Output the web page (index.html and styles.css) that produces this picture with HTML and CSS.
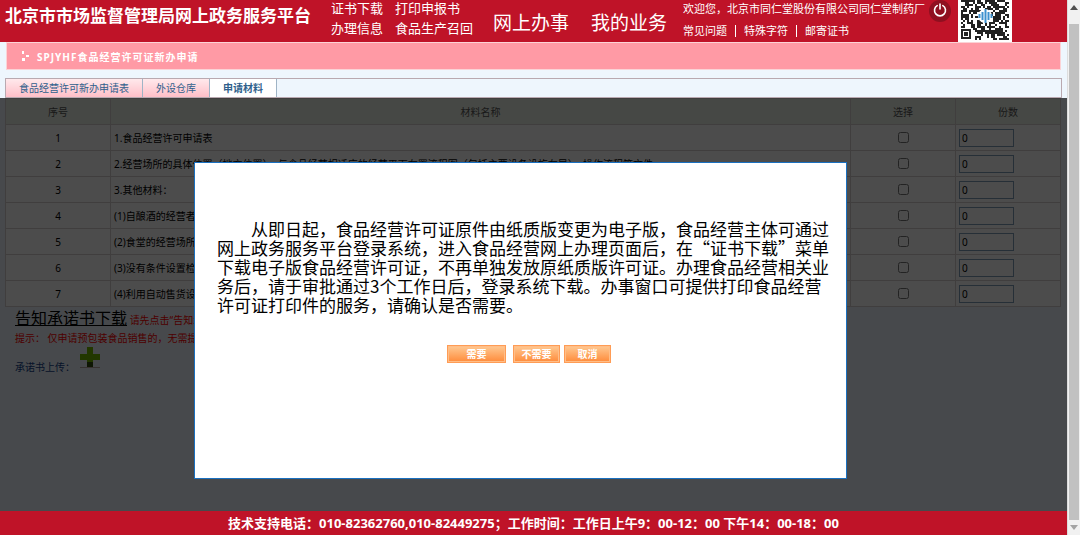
FILE: index.html
```html
<!DOCTYPE html>
<html lang="zh-CN">
<head>
    <meta charset="UTF-8">
    <meta name="viewport" content="width=device-width, initial-scale=1.0">
    <title>北京市市场监督管理局网上政务服务平台</title>
    <link rel="stylesheet" href="styles.css">
</head>
<body>
    <div class="app">
        <header class="header">
            <h1>北京市市场监督管理局网上政务服务平台</h1>
            <nav class="small-nav">
                <a href="#">证书下载</a>
                <a href="#">打印申报书</a>
                <a href="#">办理信息</a>
                <a href="#">食品生产召回</a>
            </nav>
            <nav class="main-nav">
                <a href="#">网上办事</a>
                <a href="#">我的业务</a>
            </nav>
            <div class="user">
                <p>欢迎您，北京市同仁堂股份有限公司同仁堂制药厂</p>
                <p class="help"><a href="#">常见问题</a><a href="#">特殊字符</a><a href="#">邮寄证书</a></p>
            </div>
            <button class="logout" aria-label="退出">
                <svg width="14" height="14" viewBox="0 0 14 14" fill="none" stroke="#fff" stroke-width="1.6" stroke-linecap="round">
                    <path d="M4.2 2.6A5.5 5.5 0 1 0 9.8 2.6M7 1v5"/>
                </svg>
            </button>
            <svg class="qr" id="qr" viewBox="0 0 54 42"></svg>
        </header>

        <div class="title-bar">
            <svg width="8" height="10" viewBox="0 0 8 10" fill="#fff">
                <path d="M1 0h2v3H1zM5 4h3v2H5zM1 7h3v3H1z"/>
            </svg>
            <h2>SPJYHF食品经营许可证新办申请</h2>
        </div>

        <div class="tabs">
            <button class="tab">食品经营许可新办申请表</button>
            <button class="tab">外设仓库</button>
            <button class="tab active">申请材料</button>
        </div>

        <main class="work">
            <table class="materials">
                <thead>
                    <tr><th class="col-s">序号</th><th>材料名称</th><th class="col-s">选择</th><th class="col-s">份数</th></tr>
                </thead>
                <tbody>
                    <tr><td>1</td><td>1.食品经营许可申请表</td><td><input type="checkbox" aria-label="选择1"></td><td><input type="text" value="0" aria-label="份数1"></td></tr>
                    <tr><td>2</td><td>2.经营场所的具体位置（地方位置）, 与食品经营相适应的经营平面布置流程图（包括主要设备设施布局）, 操作流程等文件</td><td><input type="checkbox" aria-label="选择2"></td><td><input type="text" value="0" aria-label="份数2"></td></tr>
                    <tr><td>3</td><td>3.其他材料：</td><td><input type="checkbox" aria-label="选择3"></td><td><input type="text" value="0" aria-label="份数3"></td></tr>
                    <tr><td>4</td><td>(1)自酿酒的经营者</td><td><input type="checkbox" aria-label="选择4"></td><td><input type="text" value="0" aria-label="份数4"></td></tr>
                    <tr><td>5</td><td>(2)食堂的经营场所</td><td><input type="checkbox" aria-label="选择5"></td><td><input type="text" value="0" aria-label="份数5"></td></tr>
                    <tr><td>6</td><td>(3)没有条件设置检</td><td><input type="checkbox" aria-label="选择6"></td><td><input type="text" value="0" aria-label="份数6"></td></tr>
                    <tr><td>7</td><td>(4)利用自动售货设</td><td><input type="checkbox" aria-label="选择7"></td><td><input type="text" value="0" aria-label="份数7"></td></tr>
                </tbody>
            </table>
            <div class="notes">
                <p class="download"><a href="#">告知承诺书下载</a> <span>请先点击“告知承</span></p>
                <p class="tip">提示： 仅申请预包装食品销售的，无需提交</p>
                <div class="upload">
                    <span>承诺书上传：</span>
                    <button class="add" aria-label="上传">
                        <svg width="22" height="22" viewBox="0 0 22 22">
                            <path d="M1 20.5h20" stroke="#b7a9a3"/>
                            <path d="M8 0h6v7h7v6h-7v7H8v-7H1V7h7z" fill="#73b800"/>
                            <path d="M8 15h6v5H8z" fill="#354d10"/>
                        </svg>
                    </button>
                </div>
            </div>
            <div class="overlay">
                <div class="dialog" role="dialog" aria-modal="true" aria-labelledby="message">
                    <p id="message">从即日起，食品经营许可证原件由纸质版变更为电子版，食品经营主体可通过网上政务服务平台登录系统，进入食品经营网上办理页面后，在“证书下载”菜单下载电子版食品经营许可证，不再单独发放原纸质版许可证。办理食品经营相关业务后，请于审批通过3个工作日后，登录系统下载。办事窗口可提供打印食品经营许可证打印件的服务，请确认是否需要。</p>
                    <div class="actions">
                        <button class="wide">需要</button>
                        <button>不需要</button>
                        <button>取消</button>
                    </div>
                </div>
            </div>
        </main>

        <footer class="footer">技术支持电话：010-82362760,010-82449275；工作时间：工作日上午9：00-12：00 下午14：00-18：00</footer>
    </div>
    <div class="scrollbar">
        <svg width="8" height="5" viewBox="0 0 8 5" fill="#505050"><path d="M0 5l4-5 4 5z"/></svg>
        <div class="thumb"></div>
        <svg width="8" height="5" viewBox="0 0 8 5" fill="#a3a3a3"><path d="M0 0l4 5 4-5z"/></svg>
    </div>
    <script src="script.js"></script>
</body>
</html>
```
FILE: styles.css
```css
* {
    box-sizing: border-box;
}
body {
    margin: 0;
    display: flex;
    min-height: 100vh;
    background: #eef6fd;
    font-family: "Noto Sans", "Noto Sans CJK SC", sans-serif;
    font-size: 10px;
}
p, h1, h2 {
    margin: 0;
}
a {
    color: inherit;
    text-decoration: none;
}
button {
    font-family: inherit;
    cursor: pointer;
}
.app {
    flex: 1;
    min-width: 0;
    display: flex;
    flex-direction: column;
}

/* header */
.header {
    display: flex;
    height: 42px;
    padding-left: 5px;
    background: #bf1328;
    color: #fff;
    white-space: nowrap;
}
.header h1 {
    width: 326px;
    font-size: 17px;
    line-height: 32px;
}
.small-nav {
    display: grid;
    grid-template-columns: auto auto;
    gap: 4px 12px;
    align-content: start;
    justify-content: start;
    width: 162px;
    font-size: 13px;
    line-height: 16px;
}
.main-nav {
    display: flex;
    gap: 22px;
    width: 190px;
    font-size: 19px;
    line-height: 46px;
}
.user {
    width: 246px;
    font-size: 11px;
    line-height: 22px;
    margin-top: -2px;
}
.help a {
    display: inline-block;
    line-height: 12px;
}
.help a + a {
    margin-left: 8px;
    padding-left: 8px;
    border-left: 1px solid #fff;
}
.logout {
    display: flex;
    align-items: center;
    justify-content: center;
    width: 22px;
    height: 22px;
    margin-right: 7px;
    padding: 0 0 2px;
    border: 0;
    border-radius: 50%;
    background: #8f1020;
}
.qr {
    width: 54px;
    height: 42px;
    background: #fff;
}

/* page title and tabs */
.title-bar {
    display: flex;
    align-items: center;
    gap: 8px;
    height: 28px;
    margin: 0 6px;
    padding-left: 14px;
    background: #ff9aa5;
    border: 1px solid #fbd3d6;
    color: #fff;
}
.title-bar h2 {
    font-size: 10px;
    letter-spacing: 1px;
}
.tabs {
    display: flex;
    height: 20px;
    margin: 8px 5px 0;
    border: 1px solid #b9a9b0;
}
.tab {
    padding: 0 13px;
    border: 0;
    border-right: 1px solid #9fb4c6;
    background: linear-gradient(#ffe9ec, #ffbfc8);
    color: #2f5f8c;
    font-size: 10px;
    line-height: 16px;
}
.tab.active {
    background: #fff;
    font-weight: bold;
}

/* materials table */
.work {
    position: relative;
    flex: 1;
}
.materials {
    width: calc(100% - 11px);
    margin: 0 6px 0 5px;
    border-collapse: collapse;
    table-layout: fixed;
    background: #fff;
}
.materials th,
.materials td {
    height: 26px;
    padding: 0 3px;
    border: 1px solid #d6d0d0;
    text-align: center;
    line-height: 16px;
    white-space: nowrap;
    overflow: hidden;
}
.materials th {
    background: #ebf0e6;
    color: #555;
    font-weight: normal;
}
.materials .col-s {
    width: 105px;
}
.materials td:nth-child(2),
.materials td:last-child {
    text-align: left;
}
.materials input {
    display: block;
}
.materials input[type=checkbox] {
    width: 11px;
    height: 11px;
    margin: 0 auto;
}
.materials input[type=text] {
    width: 55px;
    height: 18px;
    padding: 0 2px;
    border: 1px solid #7f9db9;
    background: transparent;
    font-family: inherit;
    font-size: 10px;
}
.notes {
    padding: 0 15px;
    color: #f00;
}
.download {
    line-height: 22px;
}
.download a {
    color: #000;
    font-size: 16px;
    text-decoration: underline;
}
.tip {
    line-height: 14px;
}
.upload {
    display: flex;
    gap: 4px;
    color: #15428b;
    line-height: 44px;
}
.add {
    height: 22px;
    margin-top: 2px;
    padding: 0;
    border: 0;
    background: none;
}

/* confirm dialog */
.overlay {
    position: absolute;
    inset: 0;
    padding: 64px 220px 32px 194px;
    background: rgba(0, 0, 0, 0.7);
}
.dialog {
    height: 100%;
    padding: 56px 16px 0 22px;
    background: #fff;
    border: 1px solid #1a70c0;
}
.dialog p {
    font-family: "Noto Sans CJK SC", sans-serif;
    font-size: 17px;
    line-height: 19px;
    text-indent: 2em;
}
.actions {
    display: flex;
    justify-content: center;
    gap: 4px;
    margin-top: 31px;
    padding-left: 11px;
}
.actions button {
    width: 47px;
    height: 18px;
    padding: 0;
    border: 1px solid #ff9c55;
    background: linear-gradient(#ffc992, #ff8b3a);
    box-shadow: inset 0 0 0 1px #ffbe88;
    color: #fff;
    font-size: 10px;
    font-weight: bold;
    line-height: 16px;
}
.actions .wide {
    width: 59px;
    margin-right: 3px;
}

.footer {
    height: 24px;
    background: #bf1328;
    color: #fff;
    font-size: 13px;
    font-weight: bold;
    line-height: 24px;
    text-align: center;
}

.scrollbar {
    display: flex;
    flex-direction: column;
    align-items: center;
    width: 13px;
    padding: 5px 0;
    background: #f1f1f1;
    border-left: 1px solid #ddd;
}
.thumb {
    flex: 1;
    width: 10px;
    margin: 14px 0 5px;
    background: #c1c1c1;
}
```
FILE: script.js
```js
// QR code: modules outside the finder squares come from a fixed sequence
const size = 2;
const qr = document.getElementById('qr');
let d = '';
let seed = 77;
for (let y = 0; y < 20; y++) {
    for (let x = 0; x < 24; x++) {
        seed = (seed * 1103 + 12345) % 65536;
        const finder = y > 13 && x < 6;
        if (!finder && seed % 100 < 55) {
            d += `M${3 + x * size} ${y * size}h${size}v${size}h-${size}z`;
        }
    }
}
qr.innerHTML = `<path d="${d}" fill="#222"/>
    <path d="M4 30h8v8H4z" fill="#fff" stroke="#222" stroke-width="2"/>
    <path d="M6 32h4v4H6z" fill="#222"/>
    <circle cx="27" cy="16" r="7" fill="#fff"/>
    <path d="M21.5 14v4M24.5 12v8M27.5 9v14M30.5 12v8M33.5 14v4" stroke="#3d91cf" stroke-width="2"/>`;
```
